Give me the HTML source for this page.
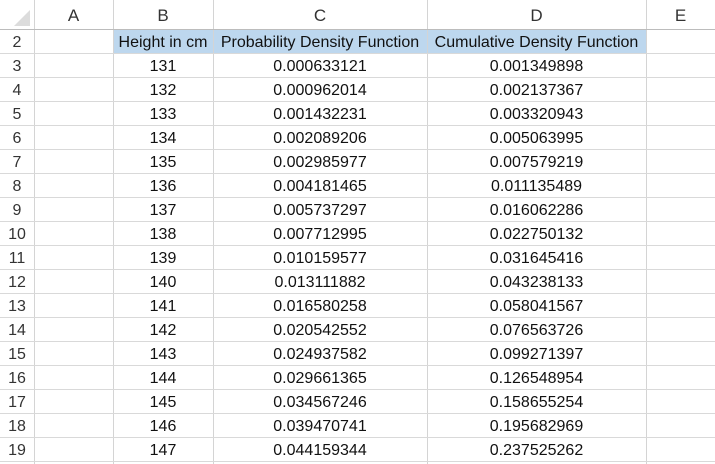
<!DOCTYPE html>
<html><head><style>
body{margin:0;width:715px;height:464px;overflow:hidden;background:#fff;font-family:"Liberation Sans",sans-serif;font-size:16px;color:#111}
.c{position:absolute;text-align:center;white-space:nowrap;line-height:20px}
.v{position:absolute;top:0;width:1px;height:464px;background:#d4d4d4}
.h{position:absolute;left:0;width:715px;height:1px;background:#d9d9d9}
</style></head><body>
<div style="position:absolute;left:113px;top:30px;width:533px;height:23px;background:#bdd7ee"></div>
<div style="position:absolute;left:14px;top:10px;width:0;height:0;border-left:16px solid transparent;border-bottom:16px solid #dcdcdc"></div>
<div class="v" style="left:34px"></div><div class="v" style="left:113px"></div><div class="v" style="left:213px"></div><div class="v" style="left:427px"></div><div class="v" style="left:646px"></div>
<div class="h" style="top:29px;background:#bcbcbc"></div>
<div id="g"></div>
<script>
var cols=[["A",34,113],["B",113,213],["C",213,427],["D",427,646],["E",646,715]];
var h="";
cols.forEach(function(c){h+='<div class="c" style="left:'+c[1]+'px;width:'+(c[2]-c[1])+'px;top:6px;font-size:17px;color:#333">'+c[0]+'</div>'});
var pdf=["0.000633121","0.000962014","0.001432231","0.002089206","0.002985977","0.004181465","0.005737297","0.007712995","0.010159577","0.013111882","0.016580258","0.020542552","0.024937582","0.029661365","0.034567246","0.039470741","0.044159344"];
var cdf=["0.001349898","0.002137367","0.003320943","0.005063995","0.007579219","0.011135489","0.016062286","0.022750132","0.031645416","0.043238133","0.058041567","0.076563726","0.099271397","0.126548954","0.158655254","0.195682969","0.237525262"];
for(var r=2;r<=19;r++){var t=30+(r-2)*24;
h+='<div class="h" style="top:'+(t+23)+'px"></div>';
h+='<div class="c" style="left:0;width:34px;top:'+(t+3)+'px;color:#333">'+r+'</div>';
var b,c,d;if(r==2){b="Height in cm";c="Probability Density Function";d="Cumulative Density Function"}else{b=128+r;c=pdf[r-3];d=cdf[r-3]}
h+='<div class="c" style="left:113px;width:100px;top:'+(t+3)+'px">'+b+'</div>';
h+='<div class="c" style="left:213px;width:214px;top:'+(t+3)+'px">'+c+'</div>';
h+='<div class="c" style="left:427px;width:219px;top:'+(t+3)+'px">'+d+'</div>';}
document.getElementById("g").innerHTML=h;
</script>
</body></html>
